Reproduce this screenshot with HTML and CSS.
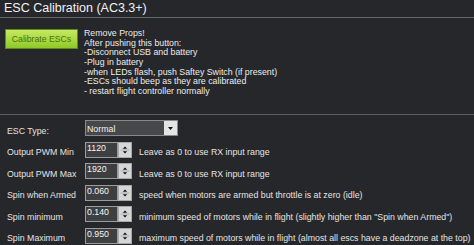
FILE: index.html
```html
<!DOCTYPE html>
<html>
<head>
<meta charset="utf-8">
<link rel="stylesheet" href="styles.css">
</head>
<body>
<div class="title">ESC Calibration (AC3.3+)</div>
<div class="calib">
  <button class="btn">Calibrate ESCs</button>
  <div class="notes">Remove Props!<br>After pushing this button:<br>-Disconnect USB and battery<br>-Plug in battery<br>-when LEDs flash, push Saftey Switch (if present)<br>-ESCs should beep as they are calibrated<br>- restart flight controller normally</div>
</div>
<div class="form">
  <div class="row">
    <span class="label">ESC Type:</span>
    <div class="select"><span class="sel-text">Normal</span><span class="sel-btn"><svg width="5" height="3" viewBox="0 0 5 3"><path d="M0 0H5L2.5 3Z" fill="#111"/></svg></span></div>
  </div>
  <div class="row">
    <span class="label">Output PWM Min</span>
    <div class="num"><span class="val">1120</span><span class="spin"><svg width="14" height="14" viewBox="0 0 14 14"><path d="M4.5 5.5H9.5L7 3Z" fill="#111"/><path d="M2 7H12" stroke="#9a9a9a" stroke-width="0.8"/><path d="M4.5 8.5H9.5L7 11Z" fill="#111"/></svg></span></div>
    <span class="desc">Leave as 0 to use RX input range</span>
  </div>
  <div class="row">
    <span class="label">Output PWM Max</span>
    <div class="num"><span class="val">1920</span><span class="spin"><svg width="14" height="14" viewBox="0 0 14 14"><path d="M4.5 5.5H9.5L7 3Z" fill="#111"/><path d="M2 7H12" stroke="#9a9a9a" stroke-width="0.8"/><path d="M4.5 8.5H9.5L7 11Z" fill="#111"/></svg></span></div>
    <span class="desc">Leave as 0 to use RX input range</span>
  </div>
  <div class="row">
    <span class="label">Spin when Armed</span>
    <div class="num"><span class="val">0.060</span><span class="spin"><svg width="14" height="14" viewBox="0 0 14 14"><path d="M4.5 5.5H9.5L7 3Z" fill="#111"/><path d="M2 7H12" stroke="#9a9a9a" stroke-width="0.8"/><path d="M4.5 8.5H9.5L7 11Z" fill="#111"/></svg></span></div>
    <span class="desc">speed when motors are armed but throttle is at zero (idle)</span>
  </div>
  <div class="row">
    <span class="label">Spin minimum</span>
    <div class="num"><span class="val">0.140</span><span class="spin"><svg width="14" height="14" viewBox="0 0 14 14"><path d="M4.5 5.5H9.5L7 3Z" fill="#111"/><path d="M2 7H12" stroke="#9a9a9a" stroke-width="0.8"/><path d="M4.5 8.5H9.5L7 11Z" fill="#111"/></svg></span></div>
    <span class="desc">minimum speed of motors while in flight (slightly higher than "Spin when Armed")</span>
  </div>
  <div class="row">
    <span class="label">Spin Maximum</span>
    <div class="num"><span class="val">0.950</span><span class="spin"><svg width="14" height="14" viewBox="0 0 14 14"><path d="M4.5 5.5H9.5L7 3Z" fill="#111"/><path d="M2 7H12" stroke="#9a9a9a" stroke-width="0.8"/><path d="M4.5 8.5H9.5L7 11Z" fill="#111"/></svg></span></div>
    <span class="desc">maximum speed of motors while in flight (almost all escs have a deadzone at the top)</span>
  </div>
</div>
</body>
</html>
```
FILE: styles.css
```css
html, body {
  margin: 0;
  padding: 0;
  background: #26272a;
  color: #e6e6e6;
  font-family: "Liberation Sans", Arial, sans-serif;
  font-size: 8.8px;
  width: 474px;
  height: 245px;
  overflow: hidden;
}

.title {
  height: 17px;
  line-height: 17px;
  font-size: 12.5px;
  color: #f2f2f2;
  padding-left: 4px;
  border-bottom: 1px solid #66686b;
}

.calib {
  box-sizing: border-box;
  height: 97px;
  display: flex;
  align-items: flex-start;
  gap: 6px;
  padding: 11px 0 0 5px;
  border-bottom: 1px solid #5c5e61;
}

.btn {
  box-sizing: border-box;
  width: 73px;
  height: 20px;
  margin: -0.5px 0 0 0;
  padding: 0;
  border: 1px solid #5f8a18;
  background: linear-gradient(#c6e963, #a8d93f 55%, #8fc828);
  color: #4f6e17;
  font-family: "Liberation Sans", Arial, sans-serif;
  font-size: 8.7px;
  line-height: 18px;
  text-align: center;
}

.notes {
  line-height: 9.67px;
  color: #ececec;
}

.form {
  display: flex;
  flex-direction: column;
  gap: 5.5px;
  padding: 5px 0 0 7px;
}

.row {
  display: flex;
  align-items: center;
  height: 16px;
}

.label {
  width: 78px;
  padding-top: 5px;
  color: #e4e4e4;
}

.select {
  box-sizing: border-box;
  width: 93px;
  height: 16px;
  display: flex;
  border: 1px solid #8a8a8a;
  background: #474849;
}

.sel-text {
  flex: 1;
  padding: 4px 0 0 1px;
  line-height: 8px;
  color: #f0f0f0;
}

.sel-btn {
  width: 13px;
  background: #e4e4e4;
  display: flex;
  align-items: center;
  justify-content: center;
}

.num {
  display: flex;
  height: 16px;
}

.val {
  box-sizing: border-box;
  width: 33px;
  height: 16px;
  border: 1px solid #9c9c9c;
  background: #3e3f41;
  padding: 0 0 0 1px;
  line-height: 10px;
  color: #f4f4f4;
}

.spin {
  box-sizing: border-box;
  width: 14px;
  height: 16px;
  background: #d6d6d6;
  border: 1px solid #a8a8a8;
  display: flex;
  align-items: center;
  justify-content: center;
  overflow: hidden;
}

.desc {
  margin-left: 7px;
  padding-top: 5px;
  color: #e4e4e4;
  white-space: nowrap;
}
```
